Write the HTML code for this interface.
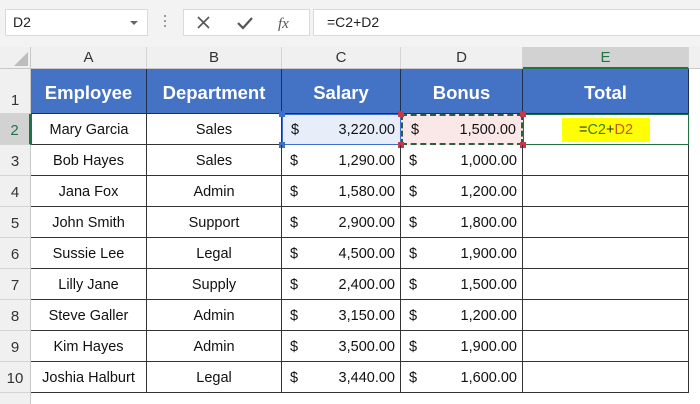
<!DOCTYPE html>
<html><head><meta charset="utf-8"><style>
*{margin:0;padding:0;box-sizing:border-box}
body{width:700px;height:404px;background:#fff;position:relative;overflow:hidden;font-family:"Liberation Sans",Arial,sans-serif}
.a{position:absolute}
.top{left:0;top:0;width:700px;height:47px;background:#f3f3f3}
.box{background:#fff;border:1px solid #dadada}
.ch{top:47px;height:22px;background:#f0f0f0;border-right:1px solid #d4d4d4;border-bottom:1px solid #c8c8c8;color:#333;font-size:15px;text-align:center;line-height:22px}
.rh{left:0;width:31px;background:#f0f0f0;border-bottom:1px solid #d4d4d4;border-right:1px solid #c8c8c8;color:#333;font-size:15px;text-align:center}
.c{height:31px;border-right:1px solid #333;border-bottom:1px solid #333;font-size:14.5px;color:#111;line-height:32px;text-align:center;white-space:nowrap}
.h{top:69px;height:45px;background:#4472c4;color:#fff;font-weight:bold;font-size:18.5px;text-align:center;line-height:48px;border-right:1px solid #1f3050;border-bottom:1px solid #1f3050}
.d{position:absolute;left:8px}
.n{position:absolute;right:5px}
</style></head><body>
<div class="a top"></div>
<div class="a box" style="left:5px;top:9px;width:143px;height:27px;font-size:14px;line-height:25px;padding-left:7px;color:#222">D2<span style="position:absolute;right:9px;top:11px;border-left:4px solid transparent;border-right:4px solid transparent;border-top:4px solid #666"></span></div>
<div class="a" style="left:164px;top:15px;width:2px;height:2px;background:#999;box-shadow:0 5px #999,0 10px #999"></div>
<div class="a box" style="left:183px;top:9px;width:127px;height:27px"></div>
<svg class="a" style="left:196px;top:14px" width="100" height="18"><path d="M2 3L13 14M13 3L2 14" stroke="#555" stroke-width="1.6"/><path d="M42 9l5 5 9-10" stroke="#555" stroke-width="2.2" fill="none"/><text x="82" y="14" font-family="Liberation Serif" font-style="italic" font-size="15" fill="#555">fx</text></svg>
<div class="a box" style="left:313px;top:9px;width:390px;height:27px;font-size:14px;line-height:25px;padding-left:13px;color:#222">=C2+D2</div>

<div class="a" style="left:0;top:47px;width:31px;height:22px;background:#f0f0f0;border-right:1px solid #c8c8c8;border-bottom:1px solid #c8c8c8"></div>
<div class="a" style="left:14px;top:52px;width:0;height:0;border-left:14px solid transparent;border-bottom:14px solid #bdbdbd"></div>
<div class="a ch" style="left:31px;width:116px">A</div>
<div class="a ch" style="left:147px;width:135px">B</div>
<div class="a ch" style="left:282px;width:119px">C</div>
<div class="a ch" style="left:401px;width:122px">D</div>
<div class="a ch" style="left:523px;width:166px;background:#d2d2d2;color:#217346;border-bottom:2px solid #217346">E</div>
<div class="a ch" style="left:689px;width:11px;border-right:none"></div>

<div class="a rh" style="top:69px;height:45px;line-height:64px">1</div>
<div class="a h" style="left:31px;width:116px">Employee</div>
<div class="a h" style="left:147px;width:135px">Department</div>
<div class="a h" style="left:282px;width:119px">Salary</div>
<div class="a h" style="left:401px;width:122px">Bonus</div>
<div class="a h" style="left:523px;width:166px">Total</div>

<div class="a rh" style="top:114px;height:31px;line-height:34px;background:#d2d2d2;color:#217346;border-right:2px solid #217346">2</div>
<div class="a c" style="left:31px;top:114px;width:116px;border-left:1px solid #217346">Mary Garcia</div>
<div class="a c" style="left:147px;top:114px;width:135px">Sales</div>
<div class="a c" style="left:282px;top:114px;width:119px;background:#e8eef9;border:1px solid #3c6fd0;line-height:30px"><span class="d">$</span><span class="n">3,220.00</span></div>
<div class="a c" style="left:401px;top:114px;width:122px;background:#fae8e8;border:2px dashed #2e5e3e;line-height:29px"><span class="d">$</span><span class="n">1,500.00</span></div>
<div class="a c" style="left:523px;top:114px;width:166px;border:1.5px solid #217346;line-height:30px"><span style="background:#ffff00;padding:4px 17px;color:#333">=<span style="color:#3a7d1e">C2</span>+<span style="color:#c55a11">D2</span></span></div>
<div class="a" style="left:279px;top:111px;width:6px;height:6px;background:#3c6fd0"></div>
<div class="a" style="left:279px;top:142px;width:6px;height:6px;background:#3c6fd0"></div>
<div class="a" style="left:398px;top:111px;width:6px;height:6px;background:#c8374a"></div>
<div class="a" style="left:398px;top:142px;width:6px;height:6px;background:#c8374a"></div>
<div class="a" style="left:520px;top:111px;width:6px;height:6px;background:#c8374a"></div>
<div class="a" style="left:520px;top:142px;width:6px;height:6px;background:#c8374a"></div>

<div class="a rh" style="top:145px;height:31px;line-height:34px">3</div>
<div class="a c" style="left:31px;top:145px;width:116px">Bob Hayes</div><div class="a c" style="left:147px;top:145px;width:135px">Sales</div><div class="a c" style="left:282px;top:145px;width:119px"><span class="d">$</span><span class="n">1,290.00</span></div><div class="a c" style="left:401px;top:145px;width:122px"><span class="d">$</span><span class="n">1,000.00</span></div><div class="a c" style="left:523px;top:145px;width:166px"></div>
<div class="a rh" style="top:176px;height:31px;line-height:34px">4</div>
<div class="a c" style="left:31px;top:176px;width:116px">Jana Fox</div><div class="a c" style="left:147px;top:176px;width:135px">Admin</div><div class="a c" style="left:282px;top:176px;width:119px"><span class="d">$</span><span class="n">1,580.00</span></div><div class="a c" style="left:401px;top:176px;width:122px"><span class="d">$</span><span class="n">1,200.00</span></div><div class="a c" style="left:523px;top:176px;width:166px"></div>
<div class="a rh" style="top:207px;height:31px;line-height:34px">5</div>
<div class="a c" style="left:31px;top:207px;width:116px">John Smith</div><div class="a c" style="left:147px;top:207px;width:135px">Support</div><div class="a c" style="left:282px;top:207px;width:119px"><span class="d">$</span><span class="n">2,900.00</span></div><div class="a c" style="left:401px;top:207px;width:122px"><span class="d">$</span><span class="n">1,800.00</span></div><div class="a c" style="left:523px;top:207px;width:166px"></div>
<div class="a rh" style="top:238px;height:31px;line-height:34px">6</div>
<div class="a c" style="left:31px;top:238px;width:116px">Sussie Lee</div><div class="a c" style="left:147px;top:238px;width:135px">Legal</div><div class="a c" style="left:282px;top:238px;width:119px"><span class="d">$</span><span class="n">4,500.00</span></div><div class="a c" style="left:401px;top:238px;width:122px"><span class="d">$</span><span class="n">1,900.00</span></div><div class="a c" style="left:523px;top:238px;width:166px"></div>
<div class="a rh" style="top:269px;height:31px;line-height:34px">7</div>
<div class="a c" style="left:31px;top:269px;width:116px">Lilly Jane</div><div class="a c" style="left:147px;top:269px;width:135px">Supply</div><div class="a c" style="left:282px;top:269px;width:119px"><span class="d">$</span><span class="n">2,400.00</span></div><div class="a c" style="left:401px;top:269px;width:122px"><span class="d">$</span><span class="n">1,500.00</span></div><div class="a c" style="left:523px;top:269px;width:166px"></div>
<div class="a rh" style="top:300px;height:31px;line-height:34px">8</div>
<div class="a c" style="left:31px;top:300px;width:116px">Steve Galler</div><div class="a c" style="left:147px;top:300px;width:135px">Admin</div><div class="a c" style="left:282px;top:300px;width:119px"><span class="d">$</span><span class="n">3,150.00</span></div><div class="a c" style="left:401px;top:300px;width:122px"><span class="d">$</span><span class="n">1,200.00</span></div><div class="a c" style="left:523px;top:300px;width:166px"></div>
<div class="a rh" style="top:331px;height:31px;line-height:34px">9</div>
<div class="a c" style="left:31px;top:331px;width:116px">Kim Hayes</div><div class="a c" style="left:147px;top:331px;width:135px">Admin</div><div class="a c" style="left:282px;top:331px;width:119px"><span class="d">$</span><span class="n">3,500.00</span></div><div class="a c" style="left:401px;top:331px;width:122px"><span class="d">$</span><span class="n">1,900.00</span></div><div class="a c" style="left:523px;top:331px;width:166px"></div>
<div class="a rh" style="top:362px;height:31px;line-height:34px">10</div>
<div class="a c" style="left:31px;top:362px;width:116px">Joshia Halburt</div><div class="a c" style="left:147px;top:362px;width:135px">Legal</div><div class="a c" style="left:282px;top:362px;width:119px"><span class="d">$</span><span class="n">3,440.00</span></div><div class="a c" style="left:401px;top:362px;width:122px"><span class="d">$</span><span class="n">1,600.00</span></div><div class="a c" style="left:523px;top:362px;width:166px"></div>
<div class="a rh" style="top:393px;height:11px;border-bottom:none"></div>
</body></html>
